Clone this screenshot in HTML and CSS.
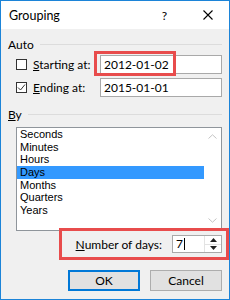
FILE: index.html
```html
<!DOCTYPE html>
<html lang="en">
<head>
    <meta charset="UTF-8">
    <meta name="viewport" content="width=device-width, initial-scale=1.0">
    <title>Grouping</title>
    <link rel="stylesheet" href="styles.css">
</head>
<body>
    <div class="dialog">
        <div class="titlebar">
            <span class="title">Grouping</span>
            <span class="help">?</span>
            <svg class="close" width="10" height="10" viewBox="0 0 10 10"><path d="M0.5 0.5L9.5 9.5M9.5 0.5L0.5 9.5" stroke="#000" stroke-width="1.1" fill="none"/></svg>
        </div>
        <div class="body">
            <div class="group_head"><span>Auto</span><i class="rule"></i></div>
            <div class="field">
                <span class="check"></span>
                <label><u>S</u>tarting at:</label>
                <span class="textbox">2012-01-02</span>
                <div class="mark mark_start"></div>
            </div>
            <div class="field">
                <span class="check"><svg width="9" height="9" viewBox="0 0 9 9"><path d="M1 4.5L3.5 7L8 1.5" stroke="#333" stroke-width="1" fill="none"/></svg></span>
                <label><u>E</u>nding at:</label>
                <span class="textbox">2015-01-01</span>
            </div>
            <div class="group_head by"><span><u>B</u>y</span><i class="rule"></i></div>
            <div class="listbox">
                <ul class="items">
                    <li>Seconds</li>
                    <li>Minutes</li>
                    <li>Hours</li>
                    <li class="sel">Days</li>
                    <li>Months</li>
                    <li>Quarters</li>
                    <li>Years</li>
                </ul>
                <div class="scroll">
                    <svg width="9" height="5" viewBox="0 0 9 5"><path d="M0.5 4.5L4.5 0.8L8.5 4.5" stroke="#c4c4c4" fill="none"/></svg>
                    <svg width="9" height="5" viewBox="0 0 9 5"><path d="M0.5 0.5L4.5 4.2L8.5 0.5" stroke="#c4c4c4" fill="none"/></svg>
                </div>
            </div>
            <div class="count">
                <label><u>N</u>umber of days:</label>
                <div class="spin_input">
                    <span class="value">7<i class="caret"></i></span>
                    <div class="spinner">
                        <span><svg width="7" height="4" viewBox="0 0 7 4"><path d="M0 4L3.5 0L7 4Z" fill="#222"/></svg></span>
                        <span><svg width="7" height="4" viewBox="0 0 7 4"><path d="M0 0L3.5 4L7 0Z" fill="#222"/></svg></span>
                    </div>
                </div>
                <div class="mark mark_count"></div>
            </div>
            <div class="buttons">
                <button class="ok">OK</button>
                <button>Cancel</button>
            </div>
        </div>
    </div>
</body>
</html>
```

FILE: styles.css
```css
body { margin: 0; padding: 0; }
.dialog { width: 230px; height: 300px; box-sizing: border-box; border: 1px solid #1c84d8; background: #f0f0f0; font-family: Lato, "Liberation Sans", sans-serif; font-size: 12px; color: #000; overflow: hidden; }

.titlebar { height: 28px; background: #fff; display: flex; align-items: center; padding-left: 8px; }
.titlebar .title { font-size: 12.5px; }
.titlebar .help { margin-left: auto; margin-right: 36px; font-size: 12px; }
.titlebar .close { margin-right: 16px; }

.body { padding: 8px 7px 0 7px; }
.group_head { display: flex; align-items: center; height: 15px; line-height: 15px; }
.group_head .rule { flex: 1; border-top: 1px solid #dcdcdc; margin-left: 6px; }
.group_head.by { margin-top: 10px; }

.field { position: relative; display: flex; align-items: center; height: 19px; margin-top: 3px; padding-left: 8px; }
.field + .field { margin-top: 4px; }
.check { width: 11px; height: 11px; box-sizing: border-box; border: 1px solid #333; background: #fff; margin-right: 6px; display: flex; align-items: center; justify-content: center; }
.field label { width: 67px; }
.textbox { flex: 1; height: 19px; box-sizing: border-box; border: 1px solid #a9a9a9; background: #fff; padding-left: 3px; line-height: 17px; }

.listbox { display: flex; height: 104px; margin: 5px 0 0 8px; box-sizing: border-box; border: 1px solid #8f959b; background: #fff; }
.items { flex: 1; list-style: none; margin: 0; padding: 0; font-family: "Liberation Sans", sans-serif; font-size: 11px; }
.items li { height: 12.67px; line-height: 12.67px; padding-left: 3px; }
.items li.sel { background: #3399ff; }
.scroll { width: 17px; display: flex; flex-direction: column; justify-content: space-between; align-items: center; padding: 6px 0 7px; }

.count { position: relative; display: flex; justify-content: flex-end; align-items: center; height: 18px; margin-top: 4px; }
.count label { margin-right: 10px; }
.spin_input { width: 50px; height: 18px; box-sizing: border-box; border: 1px solid #a9a9a9; background: #fff; display: flex; }
.spin_input .value { flex: 1; padding-left: 3px; line-height: 16px; display: flex; align-items: center; }
.caret { width: 1px; height: 12px; background: #000; margin-left: 1px; }
.spinner { width: 16px; display: flex; flex-direction: column; border-left: 1px solid #e3e3e3; }
.spinner span { flex: 1; display: flex; align-items: center; justify-content: center; }
.spinner span + span { border-top: 1px solid #e3e3e3; }

.buttons { display: flex; justify-content: flex-end; gap: 10px; margin-top: 17px; }
.buttons button { width: 72px; height: 21px; box-sizing: border-box; border: 1px solid #adadad; background: #e1e1e1; font-family: inherit; font-size: 12px; color: #000; padding: 0; }
.buttons .ok { border: 2px solid #0078d7; }

.mark { position: absolute; border: 3px solid #e84c4c; box-sizing: border-box; pointer-events: none; }
.mark_start { left: 86px; top: -4px; width: 82px; height: 25px; }
.mark_count { left: 51px; top: -7px; width: 170px; height: 32px; }
```
